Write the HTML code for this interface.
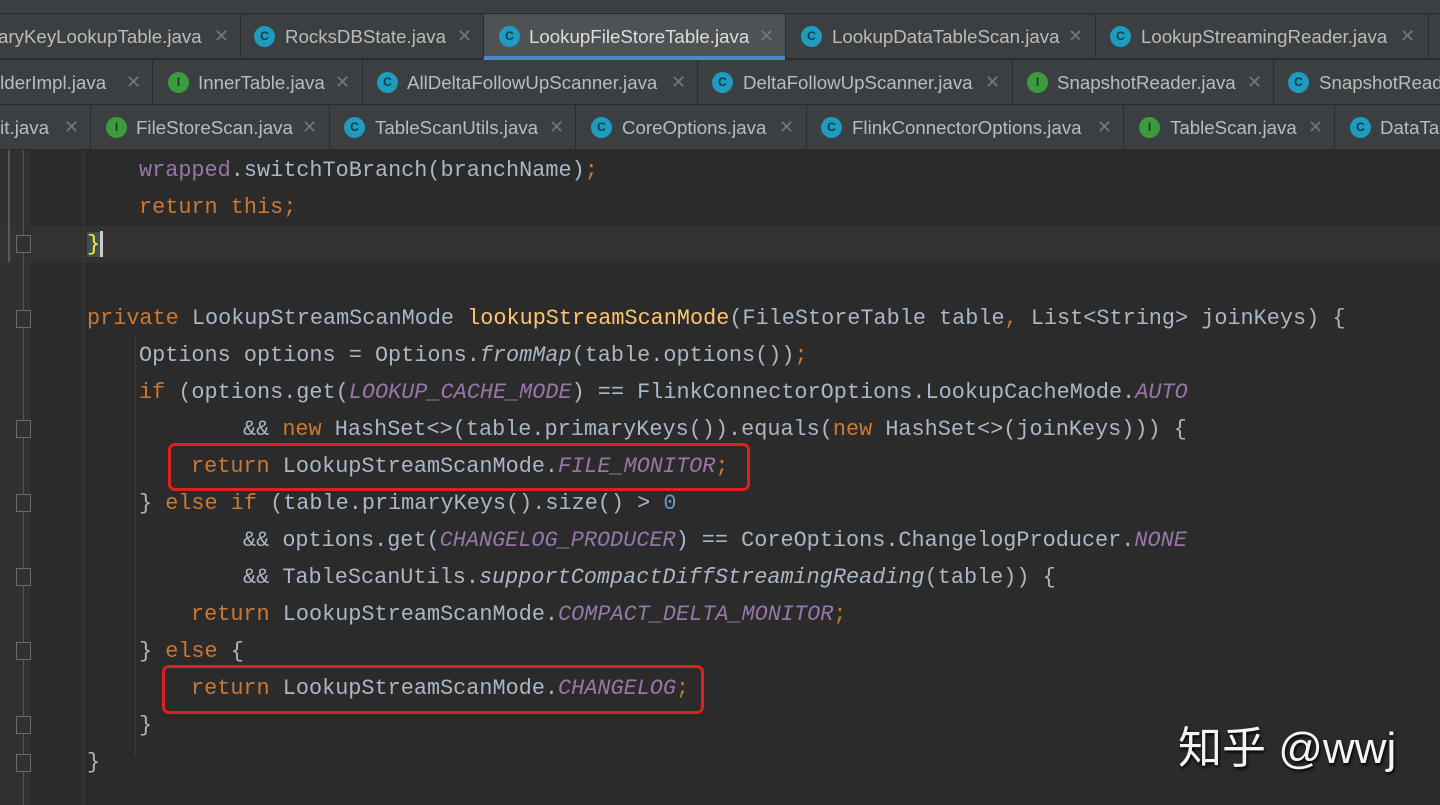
<!DOCTYPE html>
<html><head><meta charset="utf-8"><style>
*{margin:0;padding:0;box-sizing:border-box}
body{width:1440px;height:805px;overflow:hidden;background:#2b2b2b;position:relative;font-family:"Liberation Sans",sans-serif}
.row{position:absolute;left:0;width:1440px;height:45px;background:#3c3f41;border-bottom:1px solid #2b2b2b}
.t{position:absolute;top:0;height:45px;line-height:45px;font-size:18.7px;color:#bbbbbb;white-space:nowrap}
.ic{position:absolute;top:12px;width:21px;height:21px;border-radius:50%;background:#1f9bbd;color:#0d3b4a;font-size:12px;line-height:21px;text-align:center;font-weight:bold}
.ic.g{background:#3d9b3f;color:#16401a}
.x{position:absolute;top:0;height:45px;line-height:45px;color:#777;font-size:18px}
.sep{position:absolute;top:0;width:1px;height:45px;background:#2b2b2b}
.code{position:absolute;left:0;top:0;font-family:"Liberation Mono",monospace;font-size:21.85px;color:#a9b7c6;white-space:pre}
.l{position:absolute;height:37px;line-height:37px}
.k{color:#cc7832}.p{color:#9876aa;font-style:italic}.f{color:#9876aa}.n{color:#6897bb}.m{color:#ffc66d}.i{font-style:italic}
.box{position:absolute;border:3.5px solid #e0201c;border-radius:7px}
.fold{position:absolute;left:16px;width:15px;height:18px;border:1px solid #6a6a6a;background:#2f3133}
</style></head><body>
<div style="position:absolute;left:0;top:150px;width:30px;height:655px;background:#2f3133"></div>
<div style="position:absolute;left:0;top:226px;width:1440px;height:37px;background:#323232"></div>
<div style="position:absolute;left:8px;top:150px;width:2px;height:112px;background:#555a5c"></div>
<div style="position:absolute;left:23px;top:150px;width:1px;height:655px;background:#555"></div>
<div style="position:absolute;left:83px;top:150px;width:1px;height:655px;background:#3a3a3a"></div>
<div style="position:absolute;left:135px;top:336px;width:1px;height:420px;background:#3a3a3a"></div>

<div class="fold" style="top:235px"></div><div class="fold" style="top:310px"></div>
<div class="fold" style="top:420px"></div><div class="fold" style="top:494px"></div>
<div class="fold" style="top:568px"></div><div class="fold" style="top:642px"></div>
<div class="fold" style="top:716px"></div><div class="fold" style="top:754px"></div>

<div class="row" style="top:-31px"></div>
<div class="row" style="top:14px"></div>
<div style="position:absolute;left:483px;top:14px;width:302px;height:45px;background:#4e5254"></div>
<div style="position:absolute;left:483px;top:56px;width:302px;height:4px;background:#4a88c7"></div>
<div class="row" style="top:60px"></div>
<div class="row" style="top:105px"></div>

<div style="position:absolute;left:0;top:14px;width:1440px;height:45px">
<div class="t" style="left:-2px">aryKeyLookupTable.java</div><div class="x" style="left:214px">✕</div><div class="sep" style="left:240px"></div>
<div class="ic" style="left:254px">C</div><div class="t" style="left:285px">RocksDBState.java</div><div class="x" style="left:457px">✕</div><div class="sep" style="left:483px"></div>
<div class="ic" style="left:499px">C</div><div class="t" style="left:529px;color:#ddd">LookupFileStoreTable.java</div><div class="x" style="left:759px">✕</div><div class="sep" style="left:785px"></div>
<div class="ic" style="left:801px">C</div><div class="t" style="left:832px">LookupDataTableScan.java</div><div class="x" style="left:1068px">✕</div><div class="sep" style="left:1095px"></div>
<div class="ic" style="left:1110px">C</div><div class="t" style="left:1141px">LookupStreamingReader.java</div><div class="x" style="left:1400px">✕</div><div class="sep" style="left:1428px"></div>
</div>
<div style="position:absolute;left:0;top:60px;width:1440px;height:45px">
<div class="t" style="left:-4px">ilderImpl.java</div><div class="x" style="left:126px">✕</div><div class="sep" style="left:152px"></div>
<div class="ic g" style="left:168px">I</div><div class="t" style="left:198px">InnerTable.java</div><div class="x" style="left:335px">✕</div><div class="sep" style="left:362px"></div>
<div class="ic" style="left:377px">C</div><div class="t" style="left:407px">AllDeltaFollowUpScanner.java</div><div class="x" style="left:671px">✕</div><div class="sep" style="left:697px"></div>
<div class="ic" style="left:712px">C</div><div class="t" style="left:743px">DeltaFollowUpScanner.java</div><div class="x" style="left:985px">✕</div><div class="sep" style="left:1012px"></div>
<div class="ic g" style="left:1027px">I</div><div class="t" style="left:1057px">SnapshotReader.java</div><div class="x" style="left:1247px">✕</div><div class="sep" style="left:1273px"></div>
<div class="ic" style="left:1288px">C</div><div class="t" style="left:1319px">SnapshotReader</div>
</div>
<div style="position:absolute;left:0;top:105px;width:1440px;height:45px">
<div class="t" style="left:-4px">lit.java</div><div class="x" style="left:64px">✕</div><div class="sep" style="left:90px"></div>
<div class="ic g" style="left:106px">I</div><div class="t" style="left:136px">FileStoreScan.java</div><div class="x" style="left:302px">✕</div><div class="sep" style="left:329px"></div>
<div class="ic" style="left:344px">C</div><div class="t" style="left:375px">TableScanUtils.java</div><div class="x" style="left:549px">✕</div><div class="sep" style="left:575px"></div>
<div class="ic" style="left:591px">C</div><div class="t" style="left:622px">CoreOptions.java</div><div class="x" style="left:779px">✕</div><div class="sep" style="left:806px"></div>
<div class="ic" style="left:821px">C</div><div class="t" style="left:852px">FlinkConnectorOptions.java</div><div class="x" style="left:1097px">✕</div><div class="sep" style="left:1123px"></div>
<div class="ic g" style="left:1139px">I</div><div class="t" style="left:1170px">TableScan.java</div><div class="x" style="left:1308px">✕</div><div class="sep" style="left:1334px"></div>
<div class="ic" style="left:1350px">C</div><div class="t" style="left:1380px">DataTab</div>
</div>

<div class="code">
<div class="l" style="left:139px;top:152px"><span class="f">wrapped</span>.switchToBranch(branchName)<span class="k">;</span></div>
<div class="l" style="left:139px;top:189px"><span class="k">return this;</span></div>
<div class="l" style="left:87px;top:226px"><span style="color:#ffef28;background:#3b514d">}</span><span style="display:inline-block;width:3px;height:26px;background:#ccc;vertical-align:middle"></span></div>
<div class="l" style="left:87px;top:300px"><span class="k">private </span>LookupStreamScanMode <span class="m">lookupStreamScanMode</span>(FileStoreTable table<span class="k">, </span>List&lt;String&gt; joinKeys) {</div>
<div class="l" style="left:139px;top:337px">Options options = Options.<span class="i">fromMap</span>(table.options())<span class="k">;</span></div>
<div class="l" style="left:139px;top:374px"><span class="k">if </span>(options.get(<span class="p">LOOKUP_CACHE_MODE</span>) == FlinkConnectorOptions.LookupCacheMode.<span class="p">AUTO</span></div>
<div class="l" style="left:243px;top:411px">&amp;&amp; <span class="k">new </span>HashSet&lt;&gt;(table.primaryKeys()).equals(<span class="k">new </span>HashSet&lt;&gt;(joinKeys))) {</div>
<div class="l" style="left:191px;top:448px"><span class="k">return </span>LookupStreamScanMode.<span class="p">FILE_MONITOR</span><span class="k">;</span></div>
<div class="l" style="left:139px;top:485px">} <span class="k">else if </span>(table.primaryKeys().size() &gt; <span class="n">0</span></div>
<div class="l" style="left:243px;top:522px">&amp;&amp; options.get(<span class="p">CHANGELOG_PRODUCER</span>) == CoreOptions.ChangelogProducer.<span class="p">NONE</span></div>
<div class="l" style="left:243px;top:559px">&amp;&amp; TableScanUtils.<span class="i">supportCompactDiffStreamingReading</span>(table)) {</div>
<div class="l" style="left:191px;top:596px"><span class="k">return </span>LookupStreamScanMode.<span class="p">COMPACT_DELTA_MONITOR</span><span class="k">;</span></div>
<div class="l" style="left:139px;top:633px">} <span class="k">else </span>{</div>
<div class="l" style="left:191px;top:670px"><span class="k">return </span>LookupStreamScanMode.<span class="p">CHANGELOG</span><span class="k">;</span></div>
<div class="l" style="left:139px;top:707px">}</div>
<div class="l" style="left:87px;top:744px">}</div>
</div>
<div class="box" style="left:168px;top:443px;width:582px;height:48px"></div>
<div class="box" style="left:162px;top:665px;width:542px;height:49px"></div>
<div style="position:absolute;left:1178px;top:712px;font-family:'Liberation Sans','Noto Sans CJK SC',sans-serif;font-size:44px;color:#f4f4f4;text-shadow:1px 2px 3px #000;white-space:nowrap">知乎 @wwj</div>
</body></html>
